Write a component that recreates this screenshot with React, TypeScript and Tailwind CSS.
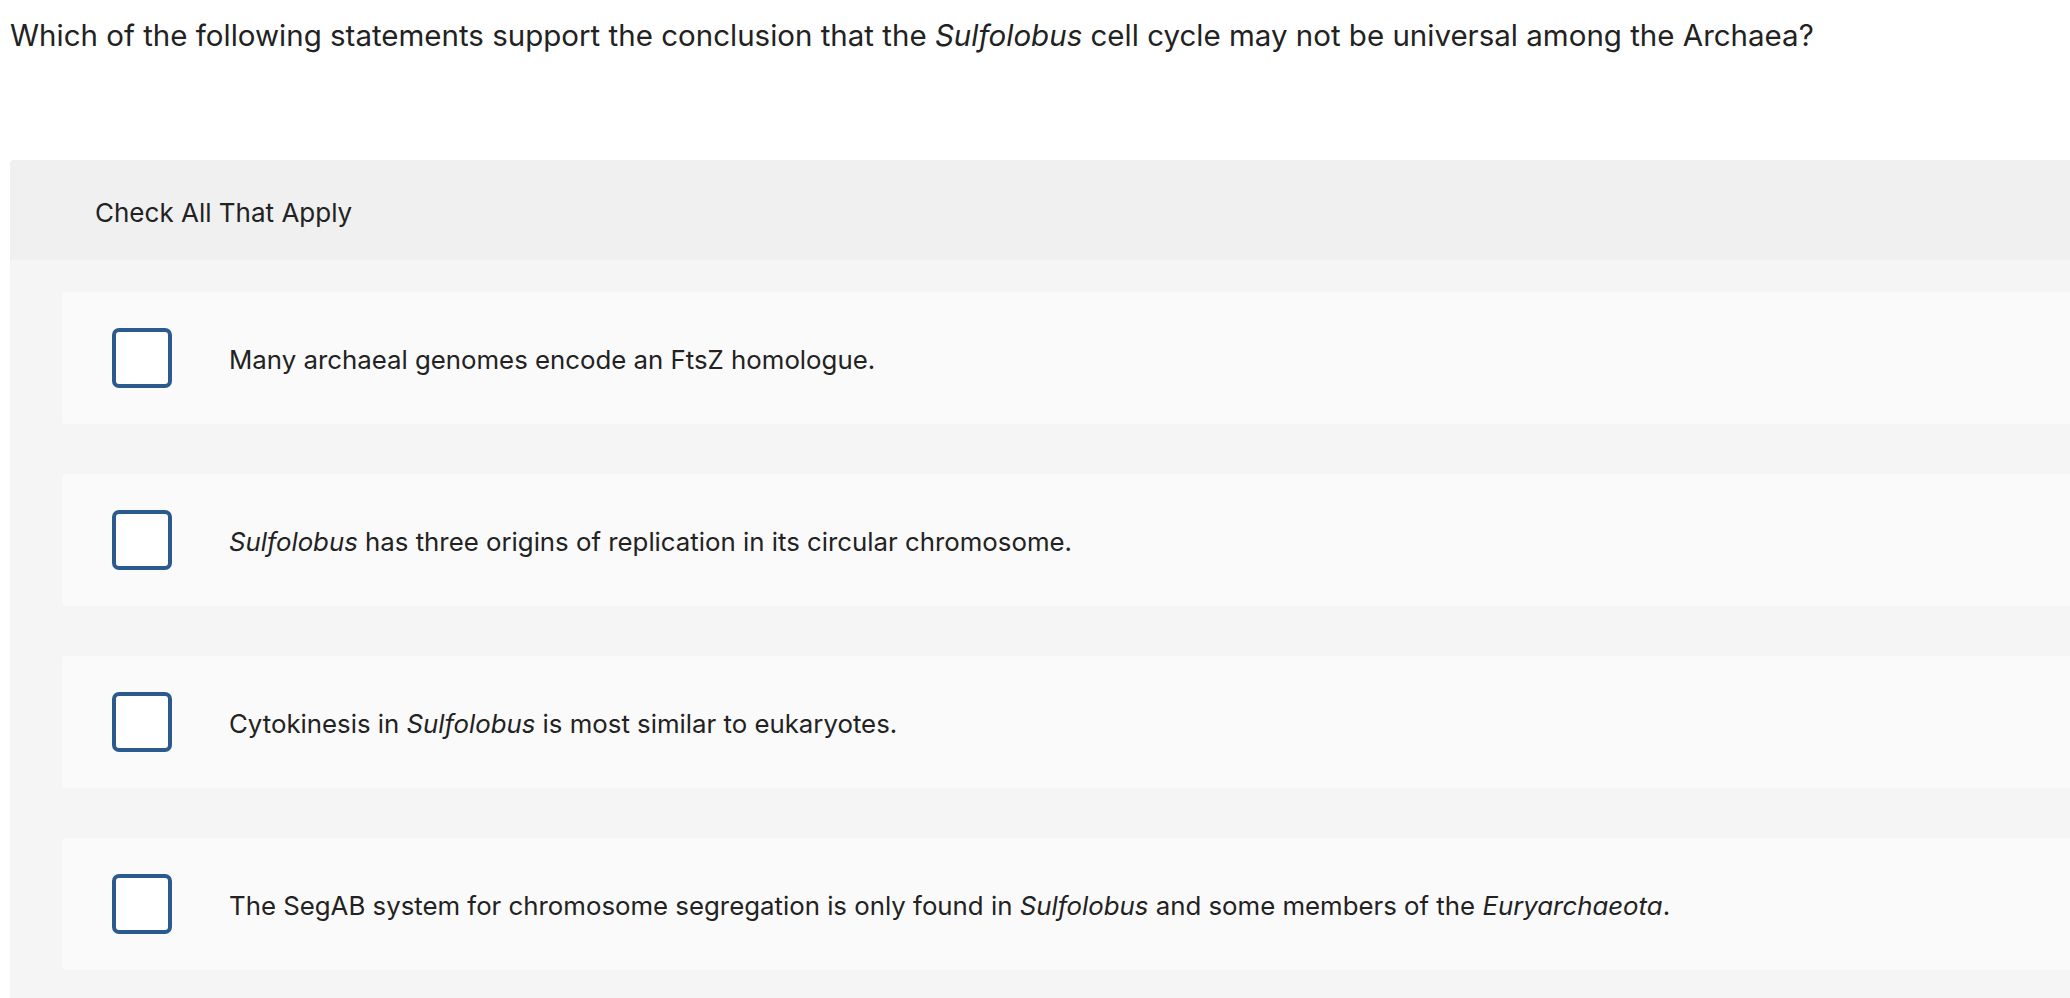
const options: React.ReactNode[] = [
  <>Many archaeal genomes encode an FtsZ homologue.</>,
  <>
    <i>Sulfolobus</i> has three origins of replication in its circular chromosome.
  </>,
  <>
    Cytokinesis in <i>Sulfolobus</i> is most similar to eukaryotes.
  </>,
  <>
    The SegAB system for chromosome segregation is only found in <i>Sulfolobus</i> and some members of
    the <i>Euryarchaeota</i>.
  </>,
];

export default function App() {
  return (
    <div
      className="h-[998px] w-[2070px] overflow-hidden bg-white text-[#222222]"
      style={{ fontFamily: 'Inter, "Open Sans", sans-serif' }}
    >
      <h1 className="pl-[10px] pt-[17px] text-[29.5px] font-normal leading-[36px]">
        Which of the following statements support the conclusion that the <i>Sulfolobus</i> cell cycle
        may not be universal among the Archaea?
      </h1>

      <div className="ml-[10px] mt-[107px] w-[2200px] rounded-t-[4px] bg-[#f5f5f5]">
        <div className="flex h-[100px] items-center rounded-t-[4px] bg-[#f0f0f0] pl-[85px] pt-[4px] text-[26px]">
          Check All That Apply
        </div>

        <div className="flex flex-col gap-[50px] px-[52px] pb-[32px] pt-[32px]">
          {options.map((opt, i) => (
            <label
              key={i}
              className="flex h-[132px] cursor-pointer items-center gap-[57px] rounded-[4px] bg-[#fafafa] pl-[50px]"
            >
              <span className="block h-[60px] w-[60px] shrink-0 rounded-[7px] border-[4px] border-[#2b5a8e] bg-white" />
              <span className="pt-[4px] text-[25.8px] leading-[36px]">{opt}</span>
            </label>
          ))}
        </div>
      </div>
    </div>
  );
}
